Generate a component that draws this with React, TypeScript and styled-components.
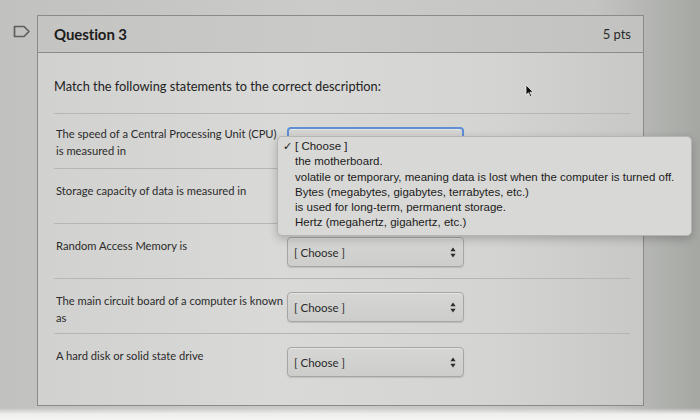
import React from "react";
import styled, { createGlobalStyle } from "styled-components";

const GlobalStyle = createGlobalStyle`
  html, body { margin: 0; padding: 0; background: #c4c5c2; }
  * { box-sizing: border-box; }
`;

const Page = styled.div`
  position: relative;
  width: 700px;
  height: 420px;
  overflow: hidden;
  display: flex;
  align-items: flex-start;
  padding-top: 15px;
  font-family: Lato, "Open Sans", sans-serif;
  color: #262626;
  background:
    linear-gradient(180deg, rgba(255,255,255,0) 0px, rgba(255,255,255,0) 408px, #eeeeec 414px, #f4f4f2 420px),
    linear-gradient(90deg, #c1c2bf 0%, #cbcbc9 45%, #c4c5c2 85%, #a5a7a3 100%);
`;

const Gutter = styled.div`
  width: 37px;
  flex: none;
  display: flex;
  justify-content: flex-start;
  padding: 10px 0 0 13px;
`;

const Card = styled.div`
  width: 607px;
  height: 391px;
  flex: none;
  border: 1px solid #8a8b88;
  display: flex;
  flex-direction: column;
  background: linear-gradient(90deg, #d1d1cf 0%, #d9d9d7 40%, #d4d4d2 75%, #c8c9c6 100%);
`;

const Header = styled.div`
  height: 37px;
  flex: none;
  display: flex;
  align-items: center;
  justify-content: space-between;
  padding: 0 12px 0 16px;
  border-bottom: 1px solid #8a8b88;
  background: linear-gradient(90deg, #c4c4c2 0%, #cacac8 50%, #c2c3c0 100%);
`;

const Title = styled.div`
  font-size: 15px;
  font-weight: 700;
  color: #1c1c1c;
  letter-spacing: -0.1px;
`;

const Points = styled.div`
  font-size: 13px;
  color: #2a2a2a;
`;

const Body = styled.div`
  padding: 0 13px 0 16px;
  display: flex;
  flex-direction: column;
`;

const Prompt = styled.div`
  font-size: 12.8px;
  line-height: 17px;
  padding: 25px 0 18px;
  border-bottom: 1px solid #b6b7b4;
  color: #222;
`;

const Row = styled.div<{ $last?: boolean }>`
  height: 55px;
  flex: none;
  display: flex;
  align-items: flex-start;
  gap: 1px;
  padding-top: 13px;
  border-bottom: ${(p) => (p.$last ? "none" : "1px solid #b6b7b4")};
`;

const Label = styled.div<{ $lift?: number }>`
  width: 232px;
  flex: none;
  padding-left: 2px;
  margin-top: ${(p) => -(p.$lift ?? 0)}px;
  font-size: 11.2px;
  line-height: 17px;
  white-space: nowrap;
  color: #2b2b2b;
`;

const SelectWrap = styled.div<{ $open?: boolean }>`
  position: relative;
  width: 177px;
  flex: none;
  z-index: ${(p) => (p.$open ? 5 : "auto")};
`;

const SelectBox = styled.div<{ $focused?: boolean }>`
  height: 30px;
  display: flex;
  align-items: center;
  justify-content: space-between;
  padding: 0 7px 0 6px;
  border-radius: 4px;
  border: ${(p) => (p.$focused ? "2px solid #5f8fd6" : "1px solid #a6a7a4")};
  background: linear-gradient(180deg, #d6d6d4 0%, #cdcecb 100%);
  box-shadow: inset 0 1px 0 rgba(255,255,255,0.35), 0 1px 1px rgba(0,0,0,0.12);
  font-size: 11.5px;
  color: #2a2a2a;
`;

const SelectValue = styled.span<{ $covered?: boolean }>`
  visibility: ${(p) => (p.$covered ? "hidden" : "visible")};
`;

const Popup = styled.div`
  position: absolute;
  left: -10px;
  top: 9px;
  width: 415px;
  padding: 2px 0 4px 5px;
  border-radius: 5px;
  background: #d8d8d6;
  border: 1px solid #b5b6b3;
  box-shadow: 0 3px 10px rgba(0,0,0,0.22);
  font-family: "Liberation Sans", Arial, sans-serif;
  font-size: 11.5px;
  line-height: 15.3px;
  color: #1b1b1b;
`;

const Option = styled.div`
  display: flex;
  white-space: nowrap;
`;

const Check = styled.span`
  width: 12px;
  flex: none;
  font-family: "DejaVu Sans", sans-serif;
  font-size: 11px;
`;

const Cursor = styled.svg`
  position: absolute;
  left: 525px;
  top: 84px;
`;

function FlagIcon() {
  return (
    <svg width="18" height="13" viewBox="0 0 18 13">
      <path
        d="M1.5 1.5 H11 L16 6.5 L11 11.5 H1.5 Z"
        fill="none"
        stroke="#5e5f5c"
        strokeWidth="1.7"
        strokeLinejoin="round"
      />
    </svg>
  );
}

function Arrows() {
  return (
    <svg width="6" height="11" viewBox="0 0 6 11">
      <path d="M3 0.5 L5.6 4.3 H0.4 Z" fill="#2c2c2c" />
      <path d="M3 10.5 L5.6 6.7 H0.4 Z" fill="#2c2c2c" />
    </svg>
  );
}

function Select({ focused, covered }: { focused?: boolean; covered?: boolean }) {
  return (
    <SelectBox $focused={focused}>
      <SelectValue $covered={covered}>[ Choose ]</SelectValue>
      <Arrows />
    </SelectBox>
  );
}

const options = [
  "[ Choose ]",
  "the motherboard.",
  "volatile or temporary, meaning data is lost when the computer is turned off.",
  "Bytes (megabytes, gigabytes, terrabytes, etc.)",
  "is used for long-term, permanent storage.",
  "Hertz (megahertz, gigahertz, etc.)",
];

export default function App() {
  return (
    <>
      <GlobalStyle />
      <Page>
        <Gutter>
          <FlagIcon />
        </Gutter>
        <Card>
          <Header>
            <Title>Question 3</Title>
            <Points>5 pts</Points>
          </Header>
          <Body>
            <Prompt>Match the following statements to the correct description:</Prompt>
            <Row>
              <Label $lift={2}>
                The speed of a Central Processing Unit (CPU)
                <br />
                is measured in
              </Label>
              <SelectWrap $open>
                <Select focused covered />
                <Popup>
                  {options.map((o, i) => (
                    <Option key={i}>
                      <Check>{i === 0 ? "✓" : ""}</Check>
                      <span>{o}</span>
                    </Option>
                  ))}
                </Popup>
              </SelectWrap>
            </Row>
            <Row>
              <Label>Storage capacity of data is measured in</Label>
              <SelectWrap>
                <Select covered />
              </SelectWrap>
            </Row>
            <Row>
              <Label>Random Access Memory is</Label>
              <SelectWrap>
                <Select />
              </SelectWrap>
            </Row>
            <Row>
              <Label>
                The main circuit board of a computer is known
                <br />
                as
              </Label>
              <SelectWrap>
                <Select />
              </SelectWrap>
            </Row>
            <Row $last>
              <Label>A hard disk or solid state drive</Label>
              <SelectWrap>
                <Select />
              </SelectWrap>
            </Row>
          </Body>
        </Card>
        <Cursor width="9" height="14" viewBox="0 0 9 14">
          <path d="M1 1 L1 11 L3.5 8.8 L5.3 12.8 L6.8 12.1 L5 8.2 L8.2 8.2 Z" fill="#111" stroke="#eee" strokeWidth="0.8" />
        </Cursor>
      </Page>
    </>
  );
}
